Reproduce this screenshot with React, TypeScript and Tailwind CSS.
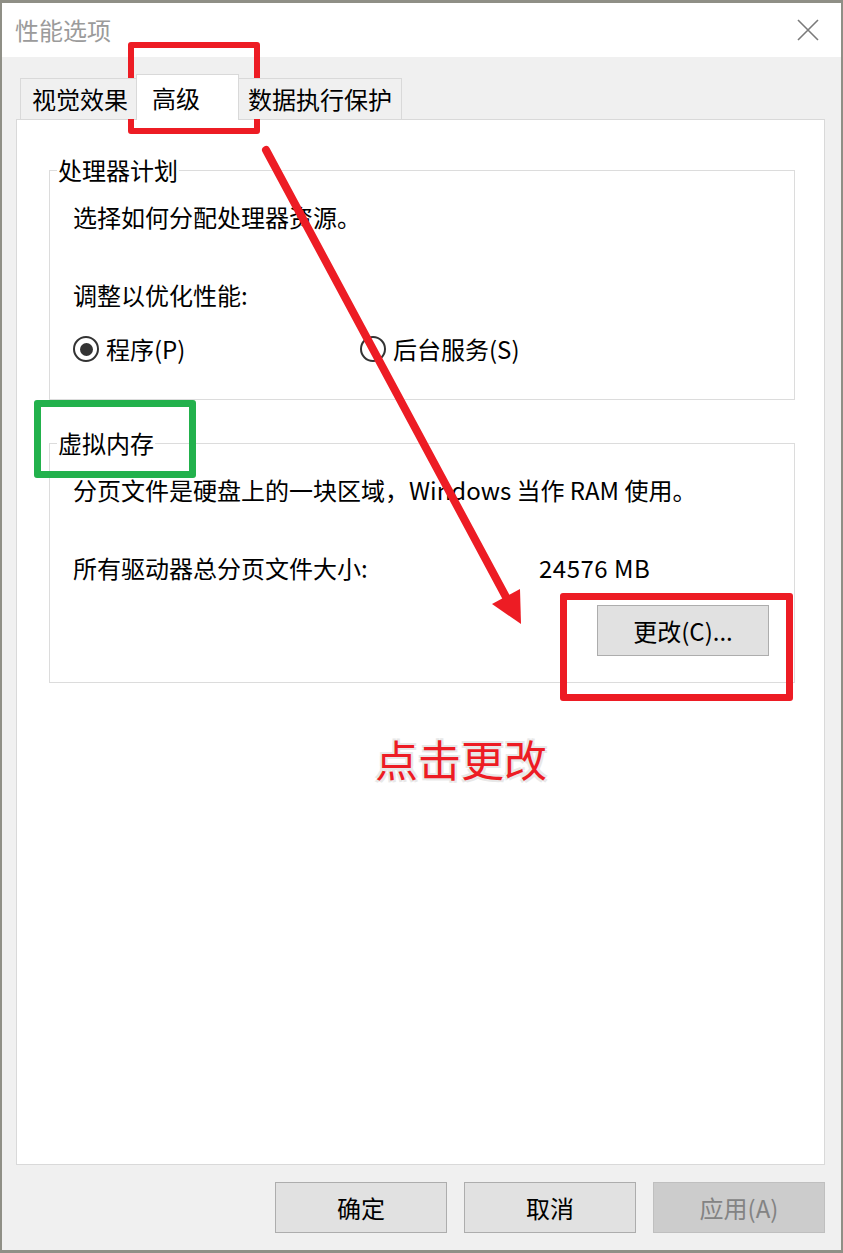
const font = "font-['Noto_Sans_CJK_SC','Noto_Sans',sans-serif]";

function Radio({ checked, label }: { checked?: boolean; label: string }) {
  return (
    <div className="flex items-center gap-[7px]">
      <span className="w-[26px] h-[26px] rounded-full border-2 border-[#333] bg-white flex items-center justify-center">
        {checked && <span className="w-[13px] h-[13px] rounded-full bg-[#333]" />}
      </span>
      <span>{label}</span>
    </div>
  );
}

function Button({ label, disabled }: { label: string; disabled?: boolean }) {
  return (
    <button
      className={
        disabled
          ? "w-[172px] h-[51px] border border-[#bfbfbf] bg-[#cccccc] text-[#838383] flex items-center justify-center"
          : "w-[172px] h-[51px] border border-[#adadad] bg-[#e1e1e1] text-black flex items-center justify-center"
      }
    >
      {label}
    </button>
  );
}

export default function App() {
  return (
    <div className={`relative w-[843px] h-[1253px] bg-[#8f8f86] pl-[2px] pr-[2px] pt-[3px] pb-[3px] ${font}`}>
      <div className="w-full h-full flex flex-col bg-[#f0f0f0] text-[24px] leading-[24px] text-black">
        {/* title bar */}
        <div className="h-[54px] shrink-0 bg-white flex items-center justify-between pl-[13px] pr-[22px]">
          <span className="text-[#9b9b9b]">性能选项</span>
          <svg width="22" height="22" viewBox="0 0 22 22">
            <path d="M1 1 L21 21 M21 1 L1 21" stroke="#7a7a7a" strokeWidth="1.6" />
          </svg>
        </div>

        <div className="flex-1 flex flex-col pl-[14px] pr-[16px] pt-[17px] pb-[17px]">
          {/* tabs */}
          <div className="flex items-end pl-[4px] h-[45px] relative z-10">
            <div className="w-[118px] h-[41px] border border-b-0 border-[#d9d9d9] bg-[#f0f0f0] flex items-center pl-[11px]">
              视觉效果
            </div>
            <div className="-mx-[2px] w-[103px] h-[46px] -mb-[1px] border border-b-0 border-[#d9d9d9] bg-white flex items-center pl-[15px] relative z-10">
              高级
            </div>
            <div className="w-[165px] h-[41px] border border-b-0 border-[#d9d9d9] bg-[#f0f0f0] flex items-center pl-[10px]">
              数据执行保护
            </div>
          </div>

          {/* tab panel */}
          <div className="flex-1 border border-[#d9d9d9] bg-white flex flex-col pl-[32px] pr-[29px]">
            <fieldset className="mt-[38px] border border-[#dcdcdc] pl-[23px] pb-[37px]">
              <legend className="-ml-[16px] px-[1px]">处理器计划</legend>
              <div className="mt-[23px]">选择如何分配处理器资源。</div>
              <div className="mt-[54px]">调整以优化性能:</div>
              <div className="mt-[29px] flex items-center">
                <div className="w-[287px]">
                  <Radio checked label="程序(P)" />
                </div>
                <Radio label="后台服务(S)" />
              </div>
            </fieldset>

            <fieldset className="mt-[31px] border border-[#dcdcdc] pl-[23px] pr-[25px] pb-[26px]">
              <legend className="-ml-[16px] px-[1px]">虚拟内存</legend>
              <div className="mt-[23px]">分页文件是硬盘上的一块区域，Windows 当作 RAM 使用。</div>
              <div className="mt-[54px] flex">
                <span className="w-[466px]">所有驱动器总分页文件大小:</span>
                <span className="tracking-[0.5px]">24576 MB</span>
              </div>
              <div className="mt-[25px] flex justify-end">
                <button className="w-[172px] h-[51px] border border-[#adadad] bg-[#e1e1e1] flex items-center justify-center">
                  更改(C)...
                </button>
              </div>
            </fieldset>
          </div>

          {/* dialog buttons */}
          <div className="mt-[17px] flex justify-end gap-[17px]">
            <Button label="确定" />
            <Button label="取消" />
            <Button label="应用(A)" disabled />
          </div>
        </div>
      </div>

      {/* annotation marks */}
      <div className="absolute left-[128px] top-[42px] w-[132px] h-[92px] border-[6px] border-[#ed1c24] rounded-[3px]" />
      <div className="absolute left-[34px] top-[400px] w-[162px] h-[78px] border-[7px] border-[#22b14c] rounded-[3px]" />
      <div className="absolute left-[560px] top-[593px] w-[233px] h-[108px] border-[7px] border-[#ed1c24] rounded-[3px]" />
      <svg className="absolute left-0 top-0 pointer-events-none" width="843" height="1253">
        <line x1="266" y1="150" x2="506" y2="597" stroke="#ed1c24" strokeWidth="8" strokeLinecap="round" />
        <polygon points="521,624 492,604 520,589" fill="#ed1c24" />
      </svg>
      <div className="absolute left-[375px] top-[733px] text-[43px] leading-[50px] font-normal text-[#ed1c24] [text-shadow:2px_2px_0_#e8e8e8,-2px_-2px_0_#e8e8e8,2px_-2px_0_#e8e8e8,-2px_2px_0_#e8e8e8]">
        点击更改
      </div>
    </div>
  );
}
